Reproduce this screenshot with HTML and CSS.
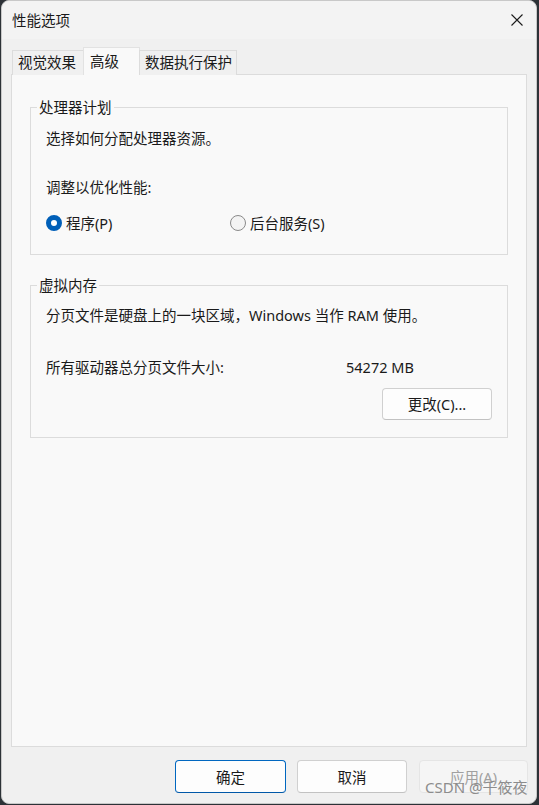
FILE: index.html
```
<!DOCTYPE html>
<html lang="zh-CN">
<head>
<meta charset="utf-8">
<title>性能选项</title>
<link rel="stylesheet" href="styles.css">
</head>
<body>
<div class="window">
  <div class="titlebar">
    <span class="title">性能选项</span>
    <span class="close">
      <svg width="12" height="12" viewBox="0 0 12 12"><path d="M0.5 0.5L11.5 11.5M11.5 0.5L0.5 11.5" stroke="#1b1b1b" stroke-width="1.1" fill="none"/></svg>
    </span>
  </div>
  <div class="tabs">
    <div class="tab">视觉效果</div>
    <div class="tab active">高级</div>
    <div class="tab">数据执行保护</div>
  </div>
  <div class="panel">
    <fieldset class="group">
      <legend>处理器计划</legend>
      <div class="line">选择如何分配处理器资源。</div>
      <div class="line gap-lg">调整以优化性能:</div>
      <div class="radios">
        <label class="option"><span class="radio checked"></span>程序(P)</label>
        <label class="option"><span class="radio"></span>后台服务(S)</label>
      </div>
    </fieldset>
    <fieldset class="group group2">
      <legend>虚拟内存</legend>
      <div class="line">分页文件是硬盘上的一块区域，Windows 当作 RAM 使用。</div>
      <div class="line size-row gap-lg2"><span>所有驱动器总分页文件大小:</span><span>54272 MB</span></div>
      <div class="btn-row"><button class="btn">更改(C)...</button></div>
    </fieldset>
  </div>
  <div class="footer">
    <button class="btn default ok">确定</button>
    <button class="btn cancel">取消</button>
    <button class="btn disabled apply">应用(A)</button>
  </div>
  <div class="watermark">CSDN @千筱夜</div>
</div>
</body>
</html>
```
FILE: styles.css
```
* { box-sizing: border-box; }
html, body { margin: 0; padding: 0; }
body {
  width: 539px;
  height: 805px;
  background: #2d3237;
  font-family: "Noto Sans", "Noto Sans CJK SC", sans-serif;
  font-size: 14.5px;
  color: #1a1a1a;
  overflow: hidden;
}
.window {
  position: relative;
  margin-left: 1px;
  width: 536px;
  height: 804px;
  background: #f0f0f0;
  border: 1px solid #c8c8c8;
  border-radius: 8px;
  display: flex;
  flex-direction: column;
}
.titlebar {
  height: 38px;
  display: flex;
  align-items: center;
  justify-content: space-between;
  padding: 0 13px 0 10px;
  background: #f3f3f3;
  border-radius: 8px 8px 0 0;
}
.title { line-height: 20px; }
.close { display: flex; width: 12px; height: 12px; }
.tabs {
  display: flex;
  margin-top: 8px;
  padding-left: 10px;
  height: 27px;
  position: relative;
  z-index: 1;
}
.tab {
  margin-top: 3px;
  height: 25px;
  padding: 0 5px;
  line-height: 23px;
  border: 1px solid #dcdcdc;
  border-bottom: none;
  background: #f0f0f0;
  white-space: nowrap;
}
.tab:first-child { width: 72px; }
.tab.active {
  margin-top: 0;
  height: 28px;
  width: 57px;
  margin-left: -1px;
  margin-right: -1px;
  padding-left: 6px;
  background: #f9f9f9;
  line-height: 26px;
  border-color: #e2e2e2;
}
.tab:last-child { width: 98px; }
.panel {
  margin: 0 9px 0 9px;
  height: 673px;
  background: #f9f9f9;
  border: 1px solid #dcdcdc;
  padding: 23px 18px 0 18px;
}
.group {
  margin: 0;
  border: 1px solid #dcdcdc;
  padding: 12px 15px 21px 15px;
  min-width: 0;
}
.group2 { margin-top: 21px; padding-top: 11px; padding-bottom: 17px; }
legend {
  margin-left: -9px;
  padding: 0 2px;
  line-height: 18px;
}
.line { line-height: 20px; white-space: nowrap; }
.gap-lg { margin-top: 29px; }
.gap-lg2 { margin-top: 32px; }
.radios {
  display: flex;
  margin-top: 16px;
  height: 20px;
  align-items: center;
}
.option {
  display: flex;
  align-items: center;
  width: 184px;
  line-height: 20px;
}
.radio {
  width: 16px;
  height: 16px;
  border-radius: 50%;
  border: 1px solid #8a8a8a;
  background: #f3f3f3;
  margin-right: 4px;
  flex: none;
}
.radio.checked {
  border: 5px solid #005fb8;
  background: #ffffff;
}
.size-row {
  display: grid;
  grid-template-columns: 300px auto;
}
.btn-row {
  display: flex;
  justify-content: flex-end;
  margin-top: 11px;
}
.btn {
  font-family: inherit;
  font-size: 14.5px;
  color: #1a1a1a;
  width: 110px;
  height: 32px;
  background: #fdfdfd;
  border: 1px solid #d0d0d0;
  border-bottom-color: #c2c2c2;
  border-radius: 4px;
  padding: 0;
  line-height: 20px;
}
.footer {
  display: flex;
  justify-content: flex-end;
  padding: 13px 8px 0 0;
}
.footer .btn { height: 33px; }
.footer .ok { width: 111px; margin-right: 11px; }
.footer .cancel { width: 110px; margin-right: 12px; }
.footer .apply { width: 109px; }
.btn.default {
  border: 1px solid #0067c0;
  border-bottom-color: #0058a8;
}
.btn.disabled {
  background: #f5f5f5;
  border-color: #e5e5e5;
  color: #a0a0a0;
}
.watermark {
  position: absolute;
  left: 423px;
  top: 776px;
  font-size: 15px;
  line-height: 20px;
  color: #8c8c8c;
  white-space: nowrap;
}
```
